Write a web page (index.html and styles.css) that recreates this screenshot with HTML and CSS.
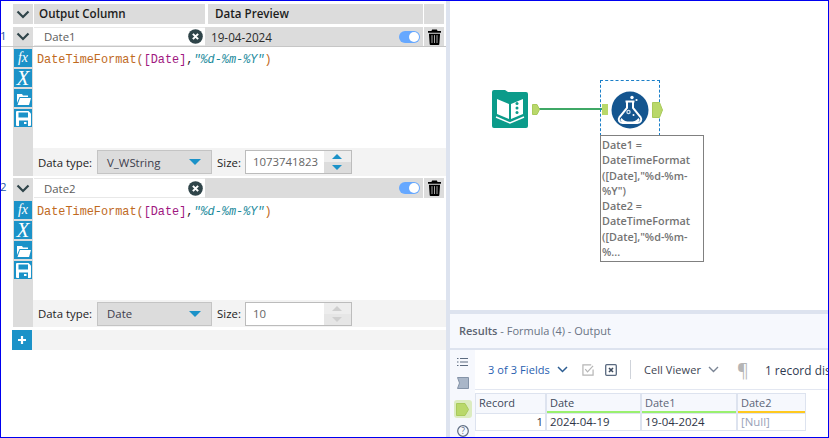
FILE: index.html
```html
<!DOCTYPE html>
<html>
<head>
<meta charset="utf-8">
<title>Formula</title>
<link rel="stylesheet" href="styles.css">
</head>
<body>
<div class="frame">
  <section class="config">
    <div class="head">
      <div class="c-idx"></div>
      <div class="c-chev"><svg width="14" height="9" viewBox="0 0 14 9"><path d="M1.500 1.500 7 7l5.500-5.500" class="chev"/></svg></div>
      <div class="c-name head-cell">Output Column</div>
      <div class="c-prev head-cell">Data Preview</div>
      <div class="c-del"></div>
    </div>

    <div class="expr">
      <div class="row-head">
        <div class="c-idx idx">1</div>
        <div class="c-chev"><svg width="14" height="9" viewBox="0 0 14 9"><path d="M1.500 1.500 7 7l5.500-5.500" class="chev"/></svg></div>
        <div class="name-box"><span>Date1</span><svg class="clear" width="15" height="15" viewBox="0 0 16 16"><circle cx="8" cy="8" r="7.800" fill="#2f4449"/><path d="M5.200 5.200l5.600 5.600M10.800 5.200l-5.600 5.600" stroke="#fff" stroke-width="2.200"/></svg></div>
        <div class="preview"><span>19-04-2024</span><span class="toggle"><i></i></span></div>
        <div class="c-del"><svg width="13" height="16" viewBox="0 0 14 17"><use href="#trash"/></svg></div>
      </div>
      <div class="body">
        <div class="tools">
          <div class="tool fx">fx</div>
          <div class="tool xx">X</div>
          <div class="tool"><svg width="15" height="13" viewBox="0 0 15 13"><use href="#folder"/></svg></div>
          <div class="tool"><svg width="15" height="15" viewBox="0 0 15 15"><use href="#disk"/></svg></div>
        </div>
        <div class="main">
          <div class="code"><span class="fn">DateTimeFormat</span><span class="par">(</span><span class="fld">[Date]</span><span class="cm">,</span><span class="str">"%d-%m-%Y"</span><span class="fn">)</span></div>
          <div class="type-bar">
            <label>Data type:</label>
            <div class="select"><span>V_WString</span><i class="caret"></i></div>
            <label>Size:</label>
            <div class="size"><span>1073741823</span><div class="spin"><b><i class="up"></i></b><b><i class="down"></i></b></div></div>
          </div>
        </div>
      </div>
    </div>

    <div class="expr second">
      <div class="row-head">
        <div class="c-idx idx">2</div>
        <div class="c-chev"><svg width="14" height="9" viewBox="0 0 14 9"><path d="M1.500 1.500 7 7l5.500-5.500" class="chev"/></svg></div>
        <div class="name-box"><span>Date2</span><svg class="clear" width="15" height="15" viewBox="0 0 16 16"><circle cx="8" cy="8" r="7.800" fill="#2f4449"/><path d="M5.200 5.200l5.600 5.600M10.800 5.200l-5.600 5.600" stroke="#fff" stroke-width="2.200"/></svg></div>
        <div class="preview"><span></span><span class="toggle"><i></i></span></div>
        <div class="c-del"><svg width="13" height="16" viewBox="0 0 14 17"><use href="#trash"/></svg></div>
      </div>
      <div class="body">
        <div class="tools">
          <div class="tool fx">fx</div>
          <div class="tool xx">X</div>
          <div class="tool"><svg width="15" height="13" viewBox="0 0 15 13"><use href="#folder"/></svg></div>
          <div class="tool"><svg width="15" height="15" viewBox="0 0 15 15"><use href="#disk"/></svg></div>
        </div>
        <div class="main">
          <div class="code"><span class="fn">DateTimeFormat</span><span class="par">(</span><span class="fld">[Date]</span><span class="cm">,</span><span class="str">"%d-%m-%Y"</span><span class="fn">)</span></div>
          <div class="type-bar">
            <label>Data type:</label>
            <div class="select"><span>Date</span><i class="caret"></i></div>
            <label>Size:</label>
            <div class="size off"><span>10</span><div class="spin"><b><i class="up"></i></b><b><i class="down"></i></b></div></div>
          </div>
        </div>
      </div>
    </div>

    <div class="add-row"><div class="add"><svg width="10" height="10" viewBox="0 0 10 10"><path d="M5 1v8M1 5h8" stroke="#fff" stroke-width="2.200"/></svg></div></div>
  </section>

  <div class="splitter"></div>

  <section class="right">
    <div class="canvas">
      <svg class="wire" width="64" height="4" viewBox="0 0 64 4"><path d="M0 2h64" stroke="#3fa866" stroke-width="2"/></svg>
      <div class="node-in">
        <svg width="36" height="38" viewBox="0 0 36 38">
          <path d="M2 0h11l3 2h18a2 2 0 0 1 2 2v32a2 2 0 0 1-2 2H2a2 2 0 0 1-2-2V2a2 2 0 0 1 2-2z" fill="#0b9b8a"/>
          <path d="M5 9l12 5v15L5 24zM19 14l12-5v15l-12 5z" fill="#fff"/>
          <path d="M4 27l14 6 14-6" fill="none" stroke="#fff" stroke-width="1.500"/>
          <circle cx="25" cy="13.500" r="1.500" fill="#0b9b8a"/><circle cx="25" cy="18" r="1.500" fill="#0b9b8a"/><circle cx="25" cy="22.500" r="1.500" fill="#0b9b8a"/>
        </svg>
      </div>
      <svg class="anchor a-out" width="8" height="11" viewBox="0 0 8 11"><path d="M.5.5h4.500l2.500 5-2.500 5H.5z" fill="#b9d86a" stroke="#a9ca5c"/></svg>
      <svg class="anchor a-in" width="6" height="11" viewBox="0 0 6 11"><rect width="6" height="11" fill="#b9d86a"/></svg>
      <div class="selection"></div>
      <svg class="flask" width="38" height="38" viewBox="0 0 38 38">
        <circle cx="19" cy="19" r="18.500" fill="#14558f"/>
        <path d="M14.500 10.500h9M16 10.500v6.500L8.500 26c-2 3 0 6 3 6h15c3 0 5-3 3-6L22 17v-6.500" fill="none" stroke="#fff" stroke-width="2"/>
        <path d="M10.500 27c2 3 5 3.500 8.500 3.500s6.500-.5 8.500-3.500l1 1.500c.5 1.500-.5 2.500-2 2.500h-15c-1.500 0-2.500-1-2-2.500z" fill="#fff"/>
        <circle cx="21" cy="6.500" r="1.700" fill="#fff"/><circle cx="25.500" cy="9" r="1.100" fill="#fff"/><circle cx="17.500" cy="21" r="1.600" fill="none" stroke="#cfe0ee" stroke-width="1.300"/><circle cx="22.500" cy="24" r="1" fill="#fff"/>
      </svg>
      <svg class="anchor a-res" width="11" height="16" viewBox="0 0 11 16"><path d="M.5.5h7l3 7.500-3 7.500h-7z" fill="#b9d86a" stroke="#a9ca5c"/></svg>
      <div class="note">Date1 = DateTimeFormat ([Date],"%d-%m-%Y")<br>Date2 = DateTimeFormat ([Date],"%d-%m-%...</div>
    </div>

    <div class="results">
      <div class="res-title"><b>Results</b> - Formula (4) - Output</div>
      <div class="res-body">
        <div class="side">
          <svg width="11" height="10" viewBox="0 0 11 10"><path d="M3 1.500h8M3 5h8M3 8.500h8M0 1.500h1.500M0 5h1.500M0 8.500h1.500" stroke="#5c6b80" stroke-width="1.200"/></svg>
          <svg width="12" height="12" viewBox="0 0 12 12"><path d="M.5.5h11v11H.5l2-5.500z" fill="#a9b6c8" stroke="#8493a8"/></svg>
          <div class="side-on"><svg width="13" height="13" viewBox="0 0 13 13"><path d="M.5.500h8.500l3.500 6-3.500 6H.5z" fill="#b9d86a" stroke="#a9ca5c"/></svg></div>
          <svg class="help" width="12" height="12" viewBox="0 0 12 12"><circle cx="6" cy="6" r="5.300" fill="none" stroke="#5c6b80" stroke-width="1.200"/><text x="6" y="9" text-anchor="middle" class="q">?</text></svg>
        </div>
        <div class="grid-area">
          <div class="res-tools">
            <span class="fields">3 of 3 Fields</span>
            <svg class="down-chev" width="11" height="7" viewBox="0 0 11 7"><path d="M1 1l4.500 4.500L10 1" fill="none" stroke="#2c5d92" stroke-width="1.500"/></svg>
            <svg class="t-check" width="12" height="12" viewBox="0 0 13 13"><path d="M12 6v6H1V1h9" fill="none" stroke="#b5b5b5" stroke-width="1.300"/><path d="M3.500 5.500l2.500 3L12 2" fill="none" stroke="#b5b5b5" stroke-width="1.300"/></svg>
            <svg class="t-x" width="12" height="12" viewBox="0 0 12 12"><rect x=".7" y=".7" width="10.600" height="10.600" rx="1" fill="none" stroke="#5a6a80" stroke-width="1.300"/><path d="M4 4l4 4M8 4l-4 4" stroke="#3d4b5e" stroke-width="1.600"/></svg>
            <i class="sep"></i>
            <span class="viewer">Cell Viewer</span>
            <svg class="down-grey" width="11" height="7" viewBox="0 0 11 7"><path d="M1 1l4.500 4.500L10 1" fill="none" stroke="#7a8494" stroke-width="1.400"/></svg>
            <span class="pilcrow">¶</span>
            <span class="rec">1 record displayed</span>
          </div>
          <div class="table">
            <div class="th">Record</div>
            <div class="th green">Date</div>
            <div class="th green light">Date1</div>
            <div class="th yellow light">Date2</div>
            <div class="td num">1</div>
            <div class="td">2024-04-19</div>
            <div class="td">19-04-2024</div>
            <div class="td null">[Null]</div>
          </div>
        </div>
      </div>
    </div>
  </section>
</div>

<svg class="defs" width="0" height="0">
  <defs>
    <g id="trash">
      <path d="M4.500 .5h5l.8 1.500H14v2H0V2h3.700z" fill="#000"/>
      <path d="M1 5h12l-.8 11a1 1 0 0 1-1 1H2.800a1 1 0 0 1-1-1z" fill="#000"/>
      <path d="M4.300 6.500v8.500M7 6.500v8.500M9.700 6.500v8.500" stroke="#c8c8c8" stroke-width=".9"/>
    </g>
    <g id="folder">
      <path d="M1 4V2h5l1 1.500h5V5H3.500L1 11z" fill="#fff"/>
      <path d="M4 6h11l-2 7H1.500z" fill="#fff"/>
    </g>
    <g id="disk">
      <path d="M1 0h11.500L15 2.500V14a1 1 0 0 1-1 1H1a1 1 0 0 1-1-1V1a1 1 0 0 1 1-1z" fill="#fff"/>
      <rect x="2.500" y="1.500" width="9.500" height="5" fill="#1b92c8"/>
      <rect x="3" y="9.500" width="9" height="5.500" fill="#1b92c8"/>
      <rect x="8" y="11" width="2.500" height="2" fill="#fff"/>
    </g>
  </defs>
</svg>
</body>
</html>
```
FILE: styles.css
```css
* { box-sizing: border-box; }
html, body { margin: 0; height: 100%; }
body { font-family: "Open Sans", "Noto Sans", sans-serif; overflow: hidden; background: #fff; }
.defs { position: absolute; }
.frame {
  width: 829px; height: 438px; border: 1px solid #0000f0;
  display: flex; overflow: hidden; background: #fff;
}
.config { width: 445px; flex: none; padding-top: 3px; background: #fff; }
.splitter { width: 4px; flex: none; background: #dde3ef; }
.right { flex: 1; min-width: 0; display: flex; flex-direction: column; }

.head, .row-head { display: flex; height: 20px; }
.c-idx { width: 12px; flex: none; }
.c-chev { width: 20px; flex: none; background: #dcdcdc; display: flex; align-items: center; justify-content: center; }
.chev { fill: none; stroke: #2f4449; stroke-width: 2.200; }
.head-cell { background: #dcdcdc; font-size: 11.600px; font-weight: 600; line-height: 20px; color: #1c1c1c; }
.head .c-name { width: 171px; margin-left: 1px; padding-left: 5px; }
.head .c-prev { width: 215px; margin-left: 3px; padding-left: 7px; }
.c-del { width: 20px; margin-left: 1px; flex: none; background: #dcdcdc; display: flex; align-items: center; justify-content: center; }

.expr { margin-top: 3px; }
.second { margin-top: 2px; }
.row-head { border-bottom: 1px solid #c6c6c6; }
.second .row-head { border-bottom: 0; }
.idx { font-size: 11.400px; color: #2457a8; line-height: 18px; text-indent: -1px; }
.name-box {
  width: 171px; margin-left: 1px; background: #fff; display: flex; align-items: center; justify-content: space-between;
  padding: 0 2px 0 10px; font-size: 11.400px; color: #5c5c5c; border: 1px solid #e8e8e8; border-width: 1px 0;
}
.preview { width: 218px; background: #dcdcdc; display: flex; align-items: center; justify-content: space-between; padding: 0 3px 0 6px; font-size: 11.700px; color: #2b2b2b; }
.toggle { width: 21px; height: 12px; border-radius: 6px; background: #66a8ff; position: relative; display: block; }
.toggle i { position: absolute; right: 1px; top: 1px; width: 10px; height: 10px; border-radius: 50%; background: #fff; }

.body { display: flex; height: 129px; }
.tools { width: 20px; margin-left: 12px; flex: none; background: #dcdcdc; display: flex; flex-direction: column; gap: 2px; padding-top: 2px; align-items: center; }
.second .tools { padding-top: 3px; }
.tool { width: 18px; height: 18px; background: #1b92c8; color: #fff; display: flex; align-items: center; justify-content: center; font-family: "Liberation Serif", serif; font-style: italic; font-size: 14px; }
.xx { font-size: 21px; line-height: 18px; }
.main { flex: 1; display: flex; flex-direction: column; min-width: 0; }
.code { flex: 1; padding: 6px 0 0 4px; font-family: "Liberation Mono", monospace; font-size: 11.850px; line-height: 14px; white-space: pre; }
.second .code { padding-top: 7px; }
.fn { color: #c06a1e; }
.par { color: #b0632a; }
.fld { color: #a0177f; }
.cm { color: #222; }
.str { color: #1a8a9c; font-style: italic; }
.type-bar { height: 28px; flex: none; background: #f3f3f3; display: flex; align-items: center; padding: 0 0 0 5px; font-size: 11.400px; color: #222; }
.second .type-bar { height: 27px; }
.select { width: 115px; height: 24px; margin: 0 5px; background: #dcdcdc; border: 1px solid #c4c4c4; display: flex; align-items: center; justify-content: space-between; padding: 0 10px 0 9px; color: #3d3d4d; }
.caret { width: 0; height: 0; border: 6px solid transparent; border-top: 6px solid #1b92c8; border-bottom: 0; }
.size { width: 107px; height: 24px; margin-left: 4px; border: 1px solid #bcbcbc; background: #fff; display: flex; align-items: stretch; justify-content: space-between; color: #666; }
.size > span { padding-left: 7px; line-height: 22px; }
.spin { width: 27px; display: flex; flex-direction: column; background: #dcdcdc; }
.spin b { flex: 1; display: flex; align-items: center; justify-content: center; }
.spin b:first-child { background: #ededed; }
.up { width: 0; height: 0; border: 5px solid transparent; border-bottom: 5px solid #1b92c8; border-top: 0; }
.down { width: 0; height: 0; border: 5px solid transparent; border-top: 5px solid #1b92c8; border-bottom: 0; }
.off .up, .off .down { border-top-color: #cfcfcf; border-bottom-color: #cfcfcf; }
.off .spin { background: #e6e6e6; }
.add-row { margin: 3px 0 0 11px; height: 20px; background: #f3f3f3; }
.add { width: 20px; height: 20px; background: #1b92c8; display: flex; align-items: center; justify-content: center; }

.canvas { flex: none; height: 309px; position: relative; background: #fff; }
.node-in { position: absolute; left: 42px; top: 89px; line-height: 0; }
.anchor, .wire, .flask { position: absolute; }
.a-out { left: 82px; top: 103px; }
.wire { left: 89px; top: 106px; }
.a-in { left: 152px; top: 103px; }
.selection { position: absolute; left: 150px; top: 79px; width: 60px; height: 56px; border: 1px dashed #1b7fc8; }
.flask { left: 161px; top: 90px; }
.a-res { left: 202px; top: 101px; }
.note {
  position: absolute; left: 150px; top: 134px; width: 104px; height: 127px; background: #fff; border: 1px solid #808080;
  padding: 1px 1px; font-size: 10.800px; font-weight: 600; line-height: 15.300px; color: #737373; overflow: hidden;
}

.results { flex: 1; min-height: 0; background: #f6f8fd; border-top: 4px solid #dde3ef; display: flex; flex-direction: column; }
.res-title { height: 36px; flex: none; padding: 9px 0 0 9px; font-size: 11px; color: #6a7484; border-bottom: 2px solid #dde3ef; }
.res-title b { font-weight: 600; color: #5c6472; }
.res-body { flex: 1; display: flex; min-height: 0; overflow: hidden; }
.side { width: 25px; flex: none; display: flex; flex-direction: column; align-items: center; padding-top: 7px; background: #f6f8fd; }
.side > svg { flex: none; }
.side > svg + svg { margin-top: 10px; }
.side-on { width: 18px; height: 18px; flex: none; background: #dcecc0; border-radius: 3px; display: flex; align-items: center; justify-content: center; margin: 11px 0 0; }
.help { margin-top: 7px; }
.q { font-size: 8.500px; fill: #5c6b80; font-family: "Open Sans", sans-serif; }
.grid-area { flex: 1; min-width: 0; background: #fff; overflow: hidden; }
.res-tools { height: 40px; display: flex; align-items: center; padding-left: 13px; font-size: 11px; letter-spacing: .08px; border-bottom: 1px solid #e3e7f1; white-space: nowrap; }
.res-tools svg { flex: none; }
.fields { color: #2860b0; }
.down-chev { margin-left: 7px; }
.t-check { margin-left: 14px; }
.t-x { margin-left: 11px; }
.sep { width: 1px; height: 19px; background: #cfd3da; margin: 0 13px 0 13px; flex: none; }
.viewer { color: #3d4452; }
.down-grey { margin-left: 7px; }
.pilcrow { margin-left: 18px; font-size: 18px; color: #b5b5b5; line-height: 16px; }
.rec { margin-left: 16px; color: #2f3a50; font-size: 11.800px; }
.table { display: grid; grid-template-columns: 71px 95px 96px 69px; grid-template-rows: 21px 17px; width: 331px; margin-top: 3px; background: #f6f8fd; }
.th { font-size: 11px; line-height: 18px; padding-left: 3px; color: #40495a; border: 1px solid #dde3ef; background: #f6f8fd; }
.light { color: #5d6678; }
.green { box-shadow: inset 0 -2px 0 #9af06e; }
.yellow { box-shadow: inset 0 -2px 0 #ffc91f; }
.td { font-size: 11.400px; line-height: 16px; padding: 0 2px 0 3px; color: #2d3446; border: 1px solid #dde3ef; border-top: 0; background: #fff; }
.num { text-align: right; }
.null { color: #99a2b8; }
```
